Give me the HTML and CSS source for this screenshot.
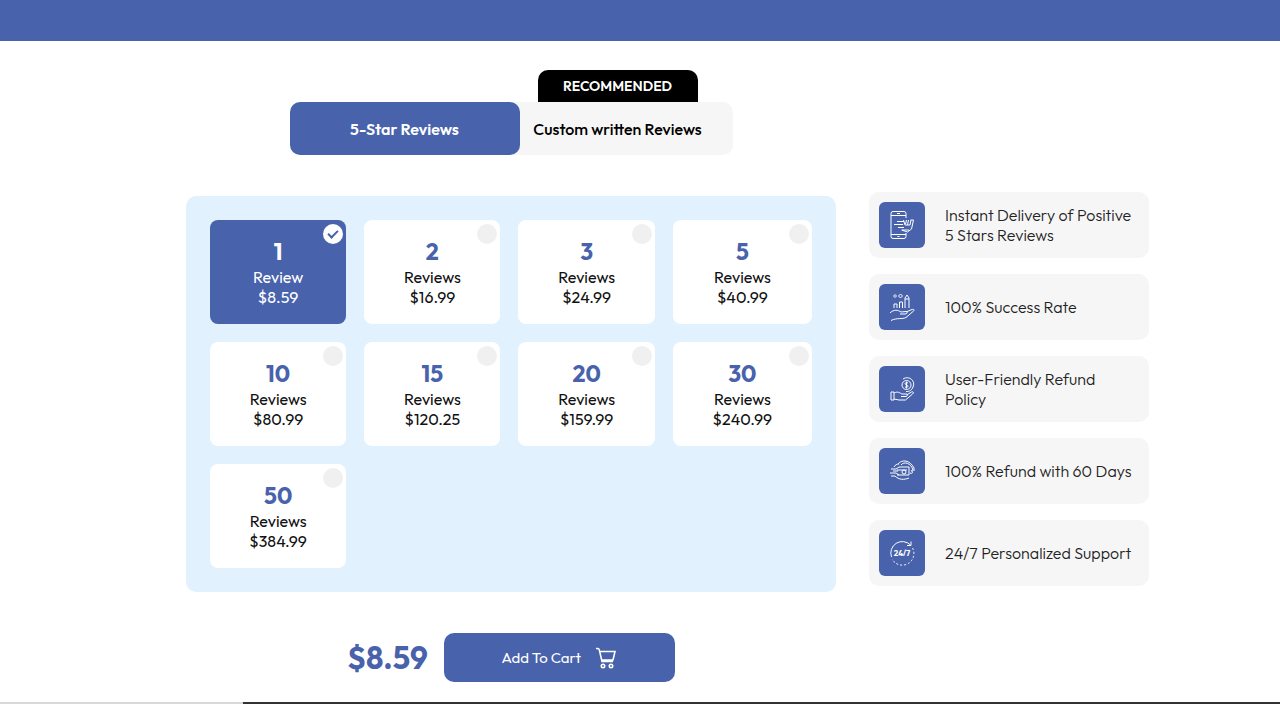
FILE: index.html
```html
<!DOCTYPE html>
<html lang="en">
<head>
<meta charset="utf-8">
<meta name="viewport" content="width=device-width, initial-scale=1">
<title>Buy Reviews</title>
<link rel="stylesheet" href="styles.css">
</head>
<body>
<header class="topbar"></header>
<main class="layout">
  <form class="shop">
    <div class="tabs">
      <button class="tab tab-active" type="button">5-Star Reviews</button>
      <div class="tab-wrap">
        <span class="ribbon">RECOMMENDED</span>
        <button class="tab tab-plain" type="button">Custom written Reviews</button>
      </div>
    </div>
    <div class="plans">
      <label class="plan"><input class="pick" type="radio" name="plan" checked><strong class="qty">1</strong><span>Review</span><span>$8.59</span></label>
      <label class="plan"><input class="pick" type="radio" name="plan"><strong class="qty">2</strong><span>Reviews</span><span>$16.99</span></label>
      <label class="plan"><input class="pick" type="radio" name="plan"><strong class="qty">3</strong><span>Reviews</span><span>$24.99</span></label>
      <label class="plan"><input class="pick" type="radio" name="plan"><strong class="qty">5</strong><span>Reviews</span><span>$40.99</span></label>
      <label class="plan"><input class="pick" type="radio" name="plan"><strong class="qty">10</strong><span>Reviews</span><span>$80.99</span></label>
      <label class="plan"><input class="pick" type="radio" name="plan"><strong class="qty">15</strong><span>Reviews</span><span>$120.25</span></label>
      <label class="plan"><input class="pick" type="radio" name="plan"><strong class="qty">20</strong><span>Reviews</span><span>$159.99</span></label>
      <label class="plan"><input class="pick" type="radio" name="plan"><strong class="qty">30</strong><span>Reviews</span><span>$240.99</span></label>
      <label class="plan"><input class="pick" type="radio" name="plan"><strong class="qty">50</strong><span>Reviews</span><span>$384.99</span></label>
    </div>
    <div class="checkout">
      <output class="total">$8.59</output>
      <button class="cart" type="submit">Add To Cart
        <svg class="cart-icon" viewBox="0 0 22 22" aria-hidden="true"><path d="M1 1.500h1.600c1 0 1.500.6 1.700 1.400L7 14.500h11M4.900 4.500H20l-2 8.500H6.500"/><circle cx="8" cy="19" r="1.700"/><circle cx="16" cy="19" r="1.700"/></svg>
      </button>
    </div>
  </form>
  <ul class="features">
    <li class="feature">
      <span class="badge"><svg viewBox="0 0 28 32" aria-hidden="true"><path d="M18 9V4.500q0-2-2-2H5q-2 0-2 2v23q0 2 2 2h11q2 0 2-2V24M3 6.500h15M3 25.500h15M9 4.500h3M9.500 27.500h2M9 12.500h7M6 15.500h9M10 18.500h6M15.500 11l1.500 5h2.500M18.500 11l-1 4M20.500 11l-1 5h2.500l1-5M25.500 11h-3M25.500 11l-2 9-4 3-6-2M14 21h7"/></svg></span>
      <span>Instant Delivery of Positive 5 Stars Reviews</span>
    </li>
    <li class="feature">
      <span class="badge"><svg viewBox="0 0 28 32" aria-hidden="true"><path d="M6 17v-4h3v4M11.500 17v-6h3v6M17 17V7l2-3 2 3v10M17 8h4M7 3.500l1.500 1.500L7 6.500 5.500 5zM12.500 3l2 2-2 2-2-2zM2 22c4-4 8-3 11-1l5-.5c2 0 1.500 2.500-1 2.500h-5M18 21l6-2.500c2-.5 3 .5 1 2l-7 6c-4 2-9 0-15 3"/></svg></span>
      <span>100% Success Rate</span>
    </li>
    <li class="feature">
      <span class="badge"><svg viewBox="0 0 28 32" aria-hidden="true"><circle cx="18.500" cy="12" r="4.500"/><path d="M15 6c6-4 13 2 10 8-1 3-4 5-7 4.500M20 10c-3-1.500-4 1.500-1.500 2s2 3-1.500 2M18.500 8.500v7M3 19h3v8H3zM6 20c4-2 6 0 8 1h4c2 0 1.500 2.500 0 2.500h-5M18.500 22l5-3c2-.8 2.500 1 1 2l-7 6H11l-5-1"/></svg></span>
      <span>User-Friendly Refund Policy</span>
    </li>
    <li class="feature">
      <span class="badge"><svg viewBox="0 0 28 32" aria-hidden="true"><path d="M3 14h5l3-2h10v8H9M9 15h10M13 10c3-4 10-2 12 5l-2 1M10 9c4-5 12-4 16 4v3M22 18c2 1 3 0 2-2M2 18h6l3 2M3 21h4c4 4 9 4 14 2M6 12c1-2 3-3 5-3M5 16h5"/><circle cx="16" cy="17" r="2"/></svg></span>
      <span>100% Refund with 60 Days</span>
    </li>
    <li class="feature">
      <span class="badge"><svg viewBox="0 0 28 32" aria-hidden="true"><path d="M3.500 20A11.500 11.500 0 0 1 22.500 8M23 4.500v4h-4"/><path stroke-dasharray="2 2" d="M24.500 11A11.500 11.500 0 0 1 4 22"/><text class="clock-text" x="14" y="19" text-anchor="middle">24/7</text></svg></span>
      <span>24/7 Personalized Support</span>
    </li>
  </ul>
</main>
<div class="divider"></div>
</body>
</html>
```
FILE: styles.css
```css
* { box-sizing: border-box; }

body {
  margin: 0;
  background: #fff;
  color: #111;
  font-family: Outfit, Lato, "Open Sans", sans-serif;
  font-size: 16px;
  line-height: 20px;
}

button { border: 0; font: inherit; cursor: pointer; }

.topbar { height: 41px; background: #4862ac; }

.layout {
  display: grid;
  grid-template-columns: 650fr 280fr;
  column-gap: 33px;
  align-items: start;
  padding: 29px 131px 20px 186px;
}

.tabs {
  display: flex;
  justify-content: center;
  align-items: flex-end;
}

.tab {
  width: 230px;
  height: 53px;
  border-radius: 10px;
  font-size: 16px;
  font-weight: 600;
}

.tab-active {
  position: relative;
  z-index: 1;
  background: #4862ac;
  color: #fff;
}

.tab-wrap {
  display: flex;
  flex-direction: column;
  align-items: center;
  margin-left: -17px;
}

.ribbon {
  width: 160px;
  padding: 6px 0;
  border-radius: 10px 10px 0 0;
  background: #000;
  color: #fff;
  font-size: 14px;
  font-weight: 600;
  text-align: center;
}

.tab-plain { background: #f6f6f6; color: #000; font-weight: 500; }

.plans {
  display: grid;
  grid-template-columns: 136fr 136fr 136fr 139fr;
  gap: 18px;
  margin-top: 41px;
  padding: 24px;
  border-radius: 10px;
  background: #e1f1fe;
}

.plan {
  position: relative;
  display: flex;
  flex-direction: column;
  align-items: center;
  height: 104px;
  padding-top: 18px;
  border-radius: 8px;
  background: #fff;
  cursor: pointer;
}

.plan:has(:checked) { background: #4862ac; color: #fff; }

.qty {
  margin-bottom: 1px;
  color: #4862ac;
  font-size: 23px;
  font-weight: 700;
  line-height: 28px;
}

.plan:has(:checked) .qty { color: #fff; }

.pick {
  appearance: none;
  position: absolute;
  top: 4px;
  right: 3px;
  width: 20px;
  height: 20px;
  margin: 0;
  border-radius: 50%;
  background: #f0f0f0;
}

.pick:checked { background: #fff; }

.pick:checked::after {
  content: "";
  position: absolute;
  box-sizing: border-box;
  top: 6px;
  left: 5px;
  width: 10px;
  height: 6px;
  border-bottom: 2px solid #4862ac;
  border-left: 2px solid #4862ac;
  transform: rotate(-45deg);
}

.checkout {
  display: flex;
  justify-content: center;
  align-items: center;
  gap: 16px;
  margin-top: 41px;
}

.total {
  color: #4862ac;
  font-size: 31px;
  font-weight: 700;
}

.cart {
  display: flex;
  justify-content: center;
  align-items: center;
  gap: 14px;
  width: 231px;
  height: 49px;
  border-radius: 10px;
  background: #4862ac;
  color: #fff;
  font-size: 15px;
}

.cart-icon {
  width: 22px;
  height: 22px;
  fill: none;
  stroke: #fff;
  stroke-width: 1.6;
}

.features {
  display: grid;
  gap: 16px;
  margin: 122px 0 0;
  padding: 0;
  list-style: none;
}

.feature {
  display: flex;
  align-items: center;
  gap: 20px;
  min-height: 66px;
  padding: 10px;
  border-radius: 10px;
  background: #f6f6f6;
  color: #222;
  font-weight: 300;
}

.badge {
  display: grid;
  place-items: center;
  flex: none;
  width: 46px;
  height: 46px;
  border-radius: 6px;
  background: #4862ac;
}

.badge svg {
  width: 28px;
  height: 32px;
  fill: none;
  stroke: #fff;
  stroke-width: 1;
}

.badge .clock-text {
  fill: #fff;
  stroke: none;
  font-size: 8px;
  font-weight: 700;
}

.divider {
  height: 2px;
  background: linear-gradient(to right, #d8d8d8 19%, #303336 19%);
}
```
